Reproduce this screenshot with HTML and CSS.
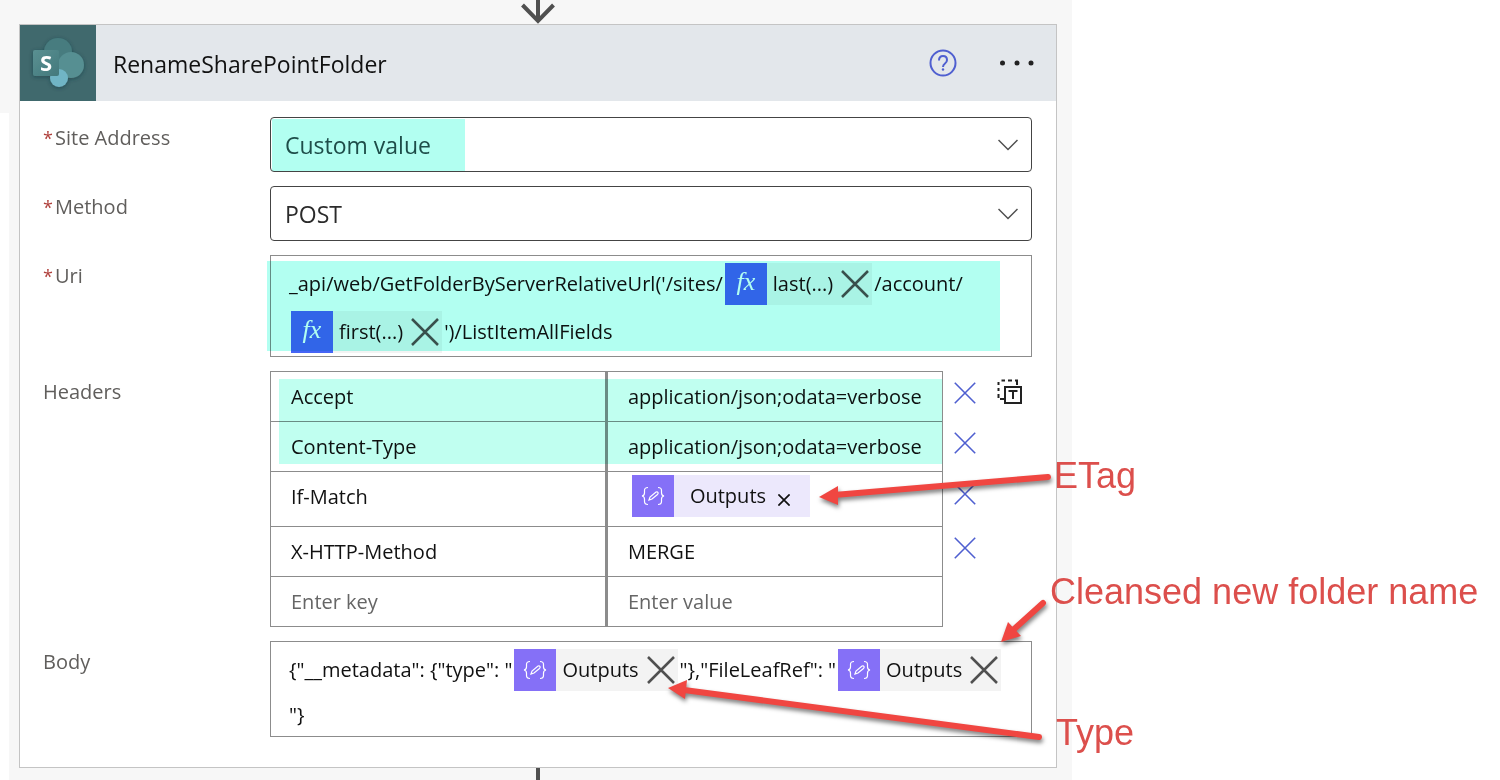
FILE: index.html
```html
<!DOCTYPE html>
<html lang="en">
<head>
<meta charset="utf-8">
<title>RenameSharePointFolder</title>
<link rel="stylesheet" href="styles.css">
</head>
<body>
<svg class="defs" aria-hidden="true">
  <symbol id="x" viewBox="0 0 28 28"><path d="M1 1 27 27M27 1 1 27"/></symbol>
  <symbol id="chevron" viewBox="0 0 20 12"><path d="M0.5 1 10 10.5 19.5 1"/></symbol>
  <symbol id="braces" viewBox="0 0 42 42">
    <path d="M16 12.500q-3.500 0-3.500 3v2.500q0 2.500-2.500 3 2.500.5 2.500 3v2.500q0 3 3.500 3M26 12.500q3.500 0 3.500 3v2.500q0 2.500 2.500 3-2.500.5-2.500 3v2.500q0 3-3.500 3"/>
    <path d="m17 25 1-3 6-5q1.500-.5 2 .500.500 1-.5 2l-5.500 4.500z"/>
  </symbol>
</svg>
<main class="page">
  <div class="canvas">
    <svg class="connector-in" viewBox="0 0 34 24" aria-hidden="true"><path d="M17 0V21M1.500 5 17 21 32.500 5"/></svg>
    <section class="card">
      <header class="card-header">
        <svg class="logo" viewBox="0 0 76 76" role="img" aria-label="SharePoint">
          <defs>
            <filter id="soft" x="-30%" y="-30%" width="160%" height="160%"><feDropShadow dx="0" dy="1" stdDeviation="2" flood-color="#12383c" flood-opacity=".55"/></filter>
            <linearGradient id="tile" x2="1" y2="1"><stop stop-color="#5a9092"/><stop offset="1" stop-color="#43797c"/></linearGradient>
          </defs>
          <rect width="76" height="76" fill="#40696d"/>
          <g filter="url(#soft)">
            <circle cx="38" cy="27" r="14" fill="#467c7f"/>
            <circle cx="51" cy="40" r="13" fill="#568f92"/>
            <circle cx="39" cy="53" r="9" fill="#70b5c5"/>
            <rect x="13" y="25" width="26" height="26" rx="2" fill="url(#tile)"/>
          </g>
          <text x="26" y="46" text-anchor="middle" class="logo-letter">S</text>
        </svg>
        <h1 class="title">RenameSharePointFolder</h1>
        <button class="icon-button help" aria-label="Help">
          <svg viewBox="0 0 28 28"><circle cx="14" cy="14" r="12.500"/><path d="M10 11.500q0-4.500 4-4.500t4 4q0 2-2 3.500-2 1.500-2 3.500"/><circle class="dot" cx="14" cy="20.500" r="1.200"/></svg>
        </button>
        <button class="icon-button more" aria-label="More actions">
          <svg viewBox="0 0 36 8"><circle cx="3.500" cy="4" r="2.500"/><circle cx="18" cy="4" r="2.500"/><circle cx="32" cy="4" r="2.500"/></svg>
        </button>
      </header>

      <form class="fields">
        <label class="label required" for="site">Site Address</label>
        <div class="select-wrap">
          <select id="site" class="select marked"><option>Custom value</option></select>
          <svg class="chevron" aria-hidden="true"><use href="#chevron"/></svg>
        </div>

        <label class="label required" for="method">Method</label>
        <div class="select-wrap">
          <select id="method" class="select"><option>POST</option></select>
          <svg class="chevron" aria-hidden="true"><use href="#chevron"/></svg>
        </div>

        <span class="label required" id="uri-label">Uri</span>
        <div class="editor uri" role="textbox" aria-labelledby="uri-label">
          <div class="line"><span>_api/web/GetFolderByServerRelativeUrl('/sites/</span><span class="chip"><i class="fx">fx</i>last(...)<button type="button" class="chip-x" aria-label="Remove last"><svg><use href="#x"/></svg></button></span><span>/account/</span></div>
          <div class="line"><span class="chip"><i class="fx">fx</i>first(...)<button type="button" class="chip-x" aria-label="Remove first"><svg><use href="#x"/></svg></button></span><span>')/ListItemAllFields</span></div>
        </div>

        <span class="label" id="headers-label">Headers</span>
        <div class="headers">
          <table class="table" aria-labelledby="headers-label">
            <colgroup><col><col><col class="col-remove"></colgroup>
            <tr>
              <td><input aria-label="Key 1" value="Accept"></td>
              <td><input aria-label="Value 1" value="application/json;odata=verbose"></td>
              <td class="remove"><button type="button" aria-label="Remove header 1"><svg><use href="#x"/></svg></button></td>
            </tr>
            <tr>
              <td><input aria-label="Key 2" value="Content-Type"></td>
              <td><input aria-label="Value 2" value="application/json;odata=verbose"></td>
              <td class="remove"><button type="button" aria-label="Remove header 2"><svg><use href="#x"/></svg></button></td>
            </tr>
            <tr class="tall">
              <td><input aria-label="Key 3" value="If-Match"></td>
              <td><span class="chip lilac"><svg class="braces"><use href="#braces"/></svg>Outputs<button type="button" class="chip-x small" aria-label="Remove Outputs"><svg><use href="#x"/></svg></button></span></td>
              <td class="remove"><button type="button" aria-label="Remove header 3"><svg><use href="#x"/></svg></button></td>
            </tr>
            <tr>
              <td><input aria-label="Key 4" value="X-HTTP-Method"></td>
              <td><input aria-label="Value 4" value="MERGE"></td>
              <td class="remove"><button type="button" aria-label="Remove header 4"><svg><use href="#x"/></svg></button></td>
            </tr>
            <tr>
              <td><input aria-label="New key" placeholder="Enter key"></td>
              <td><input aria-label="New value" placeholder="Enter value"></td>
              <td class="remove"></td>
            </tr>
          </table>
          <button type="button" class="icon-button text-mode" aria-label="Switch to text mode">
            <svg viewBox="0 0 26 26"><path d="M8 8H24V24H8zM11.500 12H20.500M16 12V20"/><path d="M1.500 6V3M4.500 1.500H8M11 1.500H15M18 1.500H20V6M1.500 9V12M1.500 15V19M3 20H7"/></svg>
          </button>
        </div>

        <span class="label" id="body-label">Body</span>
        <div class="editor body" role="textbox" aria-labelledby="body-label">
          <div class="line"><span>{"__metadata": {"type": "</span><span class="chip"><svg class="braces"><use href="#braces"/></svg>Outputs<button type="button" class="chip-x" aria-label="Remove Outputs"><svg><use href="#x"/></svg></button></span><span>"},"FileLeafRef": "</span><span class="chip"><svg class="braces"><use href="#braces"/></svg>Outputs<button type="button" class="chip-x" aria-label="Remove Outputs"><svg><use href="#x"/></svg></button></span></div>
          <div class="line"><span>"}</span></div>
        </div>
      </form>
    </section>
    <div class="connector-out"></div>

    <div class="notes">
      <svg class="arrows" viewBox="650 0 850 780" aria-hidden="true">
        <path class="shaft" d="M1048 477 834 495"/><path d="M819 497 838 486V505z"/>
        <path class="shaft" d="M1043 603 1012 631"/><path d="M1001 642 1008 622 1021 636z"/>
        <path class="shaft" d="M1039 737 684 690"/><path d="M668 688 687 680 685 699z"/>
      </svg>
      <span class="note etag">ETag</span>
      <span class="note name">Cleansed new folder name</span>
      <span class="note type">Type</span>
    </div>
  </div>
</main>
</body>
</html>
```
FILE: styles.css
```css
* { box-sizing: border-box; }

body {
  margin: 0;
  background: #fff;
  color: #111;
  font: 20px/28px "Open Sans", "Noto Sans", sans-serif;
}

button, input, select { font: inherit; color: inherit; }
button { padding: 0; border: 0; background: none; cursor: pointer; }
svg { display: block; fill: none; }
.defs { position: absolute; width: 0; height: 0; }

.page {
  display: grid;
  grid-template-columns: minmax(0, 1fr) 428px;
  min-height: 100vh;
  overflow: hidden;
}

.canvas {
  position: relative;
  display: flex;
  flex-direction: column;
  padding: 0 15px 0 19px;
  background: linear-gradient(#fff, #fff) 0 113px / 9px 100% no-repeat, #f7f7f7;
}

.connector-in { align-self: center; width: 34px; height: 24px; stroke: #505050; stroke-width: 4; }
.connector-out { align-self: center; flex: 1; width: 4px; background: #505050; }

.card { border: 1px solid #c4c4c4; background: #fff; }

.card-header { display: flex; align-items: center; background: #e3e7eb; }
.logo { width: 76px; height: 76px; }
.logo-letter { fill: #fff; font: bold 22px "Open Sans", sans-serif; }
.title { flex: 1; margin: 0 0 0 17px; padding-top: 2px; font-size: 23px; font-weight: 400; line-height: 32px; }
.icon-button { display: grid; place-items: center; }
.help { margin-right: 42px; }
.help svg { width: 28px; height: 28px; stroke: #4f5fd0; stroke-width: 2; }
.help .dot { fill: #4f5fd0; stroke: none; }
.more { margin-right: 21px; }
.more svg { width: 36px; height: 8px; fill: #222; }

.fields {
  display: grid;
  grid-template-columns: 227px minmax(0, 1fr);
  row-gap: 14px;
  padding: 16px 24px 30px 23px;
}

.label { padding-top: 7px; color: #605e5c; }
.required { display: flex; }
.required::before { content: "*"; width: 12px; color: #b0403c; font-size: 18px; }

.select-wrap { display: grid; align-items: center; }
.select-wrap > * { grid-area: 1 / 1; }
.select {
  width: 100%;
  height: 55px;
  padding: 0 14px;
  appearance: none;
  border: 1px solid #444;
  border-radius: 4px;
  background: #fff;
  color: #2b2b2b;
  font-size: 23px;
}
.marked { background: linear-gradient(#b2fff1, #b2fff1) 1px 1px / 193px 100% no-repeat; color: #1e4d49; }
.chevron { justify-self: end; width: 20px; height: 12px; margin-right: 14px; stroke: #505050; stroke-width: 1.500; pointer-events: none; }

.editor { position: relative; border: 1px solid #8c8c8c; padding: 4px 18px 0; }
.line { display: flex; align-items: center; height: 48px; white-space: nowrap; }
.body .line + .line { height: 42px; }

/* Highlighter strokes drawn over the fields. */
.headers { position: relative; }
.uri::after,
.headers::after {
  content: "";
  position: absolute;
  background: #b2fff1;
  mix-blend-mode: multiply;
  pointer-events: none;
}
.uri::after { inset: 5px 31px 5px -4px; }
.headers::after { top: 8px; right: 90px; left: 9px; height: 85px; background: #c0fff0; }

.chip { display: inline-flex; align-items: center; gap: 6px; height: 42px; margin: 0 2px; padding-right: 3px; background: #f3f3f3; }
.fx {
  width: 42px;
  height: 42px;
  background: #4665f6;
  color: #fff;
  font: italic 26px/38px "Liberation Serif", serif;
  text-align: center;
}
.braces { width: 42px; height: 42px; background: #8570f7; stroke: #fff; stroke-width: 1.200; }
.chip-x svg { width: 28px; height: 28px; margin-left: 2px; stroke: #505050; stroke-width: 2.500; }
.lilac { gap: 16px; margin-left: 24px; padding-right: 20px; background: #ece8fc; }
.small svg { width: 12px; height: 12px; margin: 8px 0 0 -4px; stroke: #111; stroke-width: 4; }

.headers { display: flex; align-items: flex-start; }
.table { flex: 1; table-layout: fixed; border-spacing: 0; }
.col-remove { width: 44px; }
.table td { height: 50px; padding: 0; border: solid #8c8c8c; border-width: 0 1px 1px 2px; }
.table td:first-child { border-left-width: 1px; border-right-width: 1px; }
.table tr:first-child td { height: 51px; border-top-width: 1px; }
.table .tall td { height: 55px; padding-top: 3px; vertical-align: top; }
.table input { display: block; width: 100%; height: 42px; padding: 0 20px; border: 0; background: none; }
.table input::placeholder { color: #666; opacity: 1; }
.table .chip { display: flex; width: max-content; }
.table .remove { border: 0; }
.table tr:first-child .remove { border: 0; }
.remove button { display: block; margin: 0 auto 8px; }
.tall .remove button { margin-top: 8px; }
.remove svg { width: 22px; height: 22px; stroke: #4f5fd0; stroke-width: 2; }
.text-mode { width: 45px; height: 42px; }
.text-mode svg { width: 26px; height: 26px; stroke: #222; stroke-width: 2; }

/* Callouts lie over the card and run past its right edge. */
.notes { position: absolute; top: 0; right: -428px; width: 850px; height: 780px; pointer-events: none; }
.arrows { width: 850px; height: 780px; fill: #f04641; filter: drop-shadow(1px 3px 2px rgba(0, 0, 0, .5)); }
.shaft { stroke: #f04641; stroke-width: 6; stroke-linecap: round; }
.note { position: absolute; color: #dc4f4c; font: 36px/40px "Liberation Sans", Arial, sans-serif; white-space: nowrap; }
.etag { left: 404px; top: 456px; }
.name { left: 400px; top: 572px; }
.type { left: 406px; top: 713px; }
```
